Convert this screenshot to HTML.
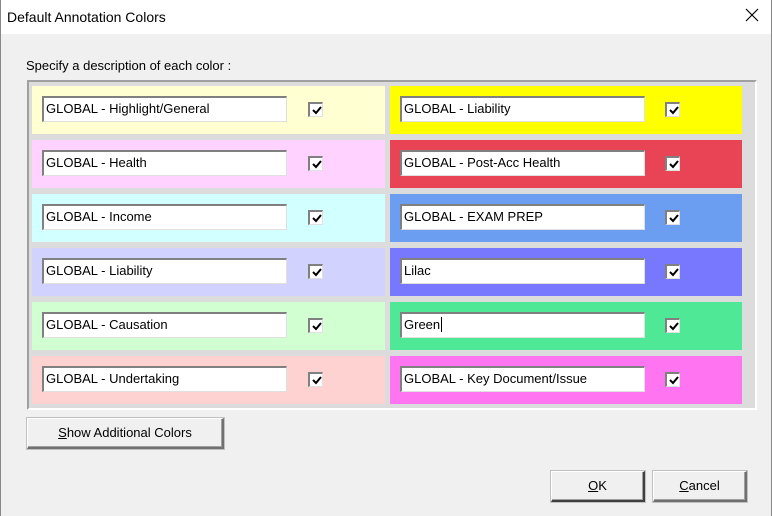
<!DOCTYPE html>
<html><head><meta charset="utf-8"><style>
*{box-sizing:border-box;margin:0;padding:0}
body{width:772px;height:516px;background:#f0f0f0;font-family:"Liberation Sans",sans-serif;font-size:13px;color:#000;position:relative;overflow:hidden}
.title{position:absolute;left:0;top:0;width:772px;height:34px;background:#fff;border-left:1px solid #888;border-right:1px solid #888}
.title span{position:absolute;left:6px;top:9px;font-size:14px}
.x{position:absolute;left:744px;top:8px;width:14px;height:14px}
.side{position:absolute;top:34px;width:1px;height:482px;background:#888}
.lbl{position:absolute;left:26px;top:58px;font-size:13px}
.frame{position:absolute;left:27px;top:80px;width:730px;height:330px;background:#dcdcdc;border-left:2px solid #a0a0a0;border-top:2px solid #a0a0a0;border-right:2px solid #fff;border-bottom:2px solid #fff}
.cell{position:absolute;height:48px}
.tb{position:absolute;top:10px;width:245px;height:26px;background:#fff;border-top:2px solid #808080;border-left:2px solid #808080;border-right:1px solid #e0e0e0;border-bottom:1px solid #e0e0e0;padding:3px 0 0 2px;font-size:13px;white-space:nowrap}
.cb{position:absolute;top:16px;width:15px;height:15px;background:#fff;border-top:2px solid #808080;border-left:2px solid #808080;border-right:1px solid #e0e0e0;border-bottom:1px solid #e0e0e0}
.cb svg{position:absolute;left:1px;top:1px}
.btn{position:absolute;background:#f0f0f0;border-top:1px solid #fff;border-left:1px solid #fff;border-right:2px solid #707070;border-bottom:2px solid #707070;text-align:center;font-size:13px;box-shadow:inset -1px -1px 0 #a0a0a0,0 0 0 1px #c0c0c0}
</style></head><body>
<div class="title"><span>Default Annotation Colors</span>
<svg class="x" viewBox="0 0 14 14"><path d="M1 1L13 13M13 1L1 13" stroke="#000" stroke-width="1.2"/></svg></div>
<div class="side" style="left:0"></div><div class="side" style="left:771px"></div>
<div class="lbl">Specify a description of each color :</div>
<div class="frame"></div>

<div class="cell" style="left:32px;top:86px;width:353px;background:#ffffd2"><div class="tb" style="left:10px">GLOBAL - Highlight/General</div><div class="cb" style="left:276px"><svg width="11" height="11"><path d="M2 5l3 3 5-6" stroke="#000" stroke-width="2" fill="none"/></svg></div></div>
<div class="cell" style="left:32px;top:140px;width:353px;background:#ffd2ff"><div class="tb" style="left:10px">GLOBAL - Health</div><div class="cb" style="left:276px"><svg width="11" height="11"><path d="M2 5l3 3 5-6" stroke="#000" stroke-width="2" fill="none"/></svg></div></div>
<div class="cell" style="left:32px;top:194px;width:353px;background:#d2ffff"><div class="tb" style="left:10px">GLOBAL - Income</div><div class="cb" style="left:276px"><svg width="11" height="11"><path d="M2 5l3 3 5-6" stroke="#000" stroke-width="2" fill="none"/></svg></div></div>
<div class="cell" style="left:32px;top:248px;width:353px;background:#d2d2ff"><div class="tb" style="left:10px">GLOBAL - Liability</div><div class="cb" style="left:276px"><svg width="11" height="11"><path d="M2 5l3 3 5-6" stroke="#000" stroke-width="2" fill="none"/></svg></div></div>
<div class="cell" style="left:32px;top:302px;width:353px;background:#d2ffd2"><div class="tb" style="left:10px">GLOBAL - Causation</div><div class="cb" style="left:276px"><svg width="11" height="11"><path d="M2 5l3 3 5-6" stroke="#000" stroke-width="2" fill="none"/></svg></div></div>
<div class="cell" style="left:32px;top:356px;width:353px;background:#ffd2d2"><div class="tb" style="left:10px">GLOBAL - Undertaking</div><div class="cb" style="left:276px"><svg width="11" height="11"><path d="M2 5l3 3 5-6" stroke="#000" stroke-width="2" fill="none"/></svg></div></div>

<div class="cell" style="left:390px;top:86px;width:352px;background:#ffff00"><div class="tb" style="left:10px">GLOBAL - Liability</div><div class="cb" style="left:275px"><svg width="11" height="11"><path d="M2 5l3 3 5-6" stroke="#000" stroke-width="2" fill="none"/></svg></div></div>
<div class="cell" style="left:390px;top:140px;width:352px;background:#e94455"><div class="tb" style="left:10px">GLOBAL - Post-Acc Health</div><div class="cb" style="left:275px"><svg width="11" height="11"><path d="M2 5l3 3 5-6" stroke="#000" stroke-width="2" fill="none"/></svg></div></div>
<div class="cell" style="left:390px;top:194px;width:352px;background:#6b9df0"><div class="tb" style="left:10px">GLOBAL - EXAM PREP</div><div class="cb" style="left:275px"><svg width="11" height="11"><path d="M2 5l3 3 5-6" stroke="#000" stroke-width="2" fill="none"/></svg></div></div>
<div class="cell" style="left:390px;top:248px;width:352px;background:#7878ff"><div class="tb" style="left:10px">Lilac</div><div class="cb" style="left:275px"><svg width="11" height="11"><path d="M2 5l3 3 5-6" stroke="#000" stroke-width="2" fill="none"/></svg></div></div>
<div class="cell" style="left:390px;top:302px;width:352px;background:#4ee896"><div class="tb" style="left:10px">Green<span style="border-left:1px solid #000;margin-left:1px"></span></div><div class="cb" style="left:275px"><svg width="11" height="11"><path d="M2 5l3 3 5-6" stroke="#000" stroke-width="2" fill="none"/></svg></div></div>
<div class="cell" style="left:390px;top:356px;width:352px;background:#ff74f0"><div class="tb" style="left:10px">GLOBAL - Key Document/Issue</div><div class="cb" style="left:275px"><svg width="11" height="11"><path d="M2 5l3 3 5-6" stroke="#000" stroke-width="2" fill="none"/></svg></div></div>

<div class="btn" style="left:27px;top:418px;width:197px;height:31px;line-height:28px"><u>S</u>how Additional Colors</div>
<div class="btn" style="left:551px;top:471px;width:94px;height:31px;line-height:28px;border-right-color:#404040;border-bottom-color:#404040"><u>O</u>K</div>
<div class="btn" style="left:653px;top:471px;width:94px;height:31px;line-height:28px"><u>C</u>ancel</div>
</body></html>
